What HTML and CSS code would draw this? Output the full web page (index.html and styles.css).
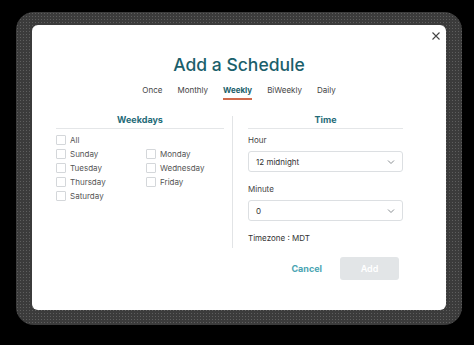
FILE: index.html
```html
<!DOCTYPE html>
<html lang="en">
<head>
    <meta charset="UTF-8">
    <title>Add a Schedule</title>
    <link rel="stylesheet" href="styles.css">
</head>
<body>
    <div class="frame">
        <div class="modal">
            <svg class="close" width="8" height="8" viewBox="0 0 8 8"><path d="M0.5 0.5 L7.5 7.5 M7.5 0.5 L0.5 7.5" stroke="#444" stroke-width="1.1"/></svg>
            <h1 class="title">Add a Schedule</h1>

            <div class="tabs">
                <span class="tab">Once</span>
                <span class="tab">Monthly</span>
                <span class="tab active">Weekly</span>
                <span class="tab">BiWeekly</span>
                <span class="tab">Daily</span>
            </div>

            <div class="columns">
                <div class="col-left">
                    <h3 class="col-title">Weekdays</h3>
                    <div class="days">
                        <label class="day full"><span class="box"></span>All</label>
                        <label class="day"><span class="box"></span>Sunday</label>
                        <label class="day"><span class="box"></span>Monday</label>
                        <label class="day"><span class="box"></span>Tuesday</label>
                        <label class="day"><span class="box"></span>Wednesday</label>
                        <label class="day"><span class="box"></span>Thursday</label>
                        <label class="day"><span class="box"></span>Friday</label>
                        <label class="day"><span class="box"></span>Saturday</label>
                    </div>
                </div>
                <div class="divider"></div>
                <div class="col-right">
                    <h3 class="col-title">Time</h3>
                    <div class="field-label">Hour</div>
                    <div class="select">
                        <span>12 midnight</span>
                        <svg width="8" height="6" viewBox="0 0 8 6"><path d="M1 1.5 L4 4.5 L7 1.5" fill="none" stroke="#8a8f93" stroke-width="1"/></svg>
                    </div>
                    <div class="field-label">Minute</div>
                    <div class="select">
                        <span>0</span>
                        <svg width="8" height="6" viewBox="0 0 8 6"><path d="M1 1.5 L4 4.5 L7 1.5" fill="none" stroke="#8a8f93" stroke-width="1"/></svg>
                    </div>
                    <div class="timezone">Timezone : MDT</div>
                </div>
            </div>

            <div class="actions">
                <button class="btn-cancel">Cancel</button>
                <button class="btn-add" disabled>Add</button>
            </div>
        </div>
    </div>
</body>
</html>
```

FILE: styles.css
```css
body {
    margin: 0;
    background-color: #000;
    font-family: "Inter", "Noto Sans", sans-serif;
    color: #333;
}
.frame {
    width: 446px;
    height: 313px;
    margin: 12px 0 0 16px;
    padding: 13px 0 0 16px;
    box-sizing: border-box;
    border-radius: 18px;
    background-color: #3b3b3b;
    background-image: radial-gradient(rgba(255, 255, 255, 0.18) 0.6px, transparent 0.8px);
    background-size: 3px 3px;
}
.modal {
    position: relative;
    width: 414px;
    height: 285px;
    box-sizing: border-box;
    padding: 28px 0 0 0;
    background-color: #fff;
    border-radius: 6px;
}
.close {
    position: absolute;
    top: 7px;
    right: 6px;
}
.title {
    margin: 0;
    text-align: center;
    font-size: 17.5px;
    font-weight: 500;
    line-height: 24px;
    color: #1b5f6b;
}
.tabs {
    display: flex;
    justify-content: center;
    gap: 15px;
    margin-top: 5px;
    font-size: 8px;
    color: #444;
}
.tab {
    padding: 3px 0 3px;
    border-bottom: 2px solid transparent;
}
.tab.active {
    font-weight: 700;
    color: #1b5f6b;
    border-bottom-color: #d06a4c;
}
.columns {
    display: flex;
    margin: 14px 0 0 24px;
}
.col-left {
    width: 168px;
}
.divider {
    width: 1px;
    height: 132px;
    margin: 2px 15px 0 8px;
    background-color: #e2e4e6;
}
.col-right {
    width: 155px;
}
.col-title {
    margin: 0;
    padding-bottom: 3px;
    border-bottom: 1px solid #e4e6e8;
    text-align: center;
    font-size: 9px;
    font-weight: 700;
    color: #1f6b78;
}
.days {
    display: grid;
    grid-template-columns: 90px 78px;
    row-gap: 4px;
    margin-top: 6px;
}
.day {
    display: flex;
    align-items: center;
    gap: 4px;
    font-size: 8px;
    color: #555;
    line-height: 10px;
}
.day.full {
    grid-column: 1 / 3;
}
.box {
    width: 8px;
    height: 8px;
    border: 1px solid #d4d7da;
    border-radius: 1px;
}
.field-label {
    margin-top: 6px;
    font-size: 8px;
    color: #444;
}
.select {
    display: flex;
    justify-content: space-between;
    align-items: center;
    height: 19px;
    margin: 6px 0 12px;
    padding: 0 7px;
    border: 1px solid #dcdfe2;
    border-radius: 3px;
    font-size: 8px;
    color: #333;
}
.timezone {
    margin-top: 1px;
    font-size: 8px;
    color: #333;
}
.actions {
    display: flex;
    justify-content: flex-end;
    align-items: center;
    gap: 18px;
    margin: 9px 47px 0 0;
}
.btn-cancel {
    border: none;
    background: none;
    font-family: inherit;
    font-size: 9px;
    font-weight: 700;
    color: #4aa4b2;
    padding: 0;
}
.btn-add {
    width: 59px;
    height: 23px;
    border: none;
    border-radius: 3px;
    background-color: #e2e5e7;
    font-family: inherit;
    font-size: 9px;
    font-weight: 600;
    color: #fff;
}
```
